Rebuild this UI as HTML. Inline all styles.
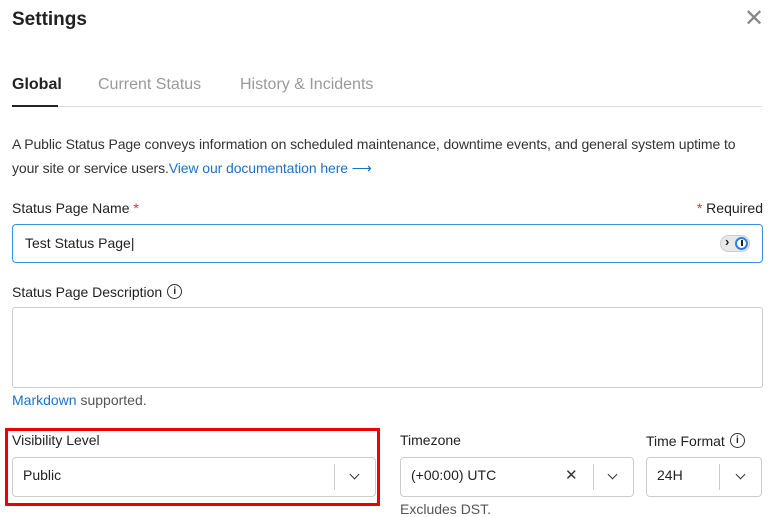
<!DOCTYPE html><html><head><style>
body{margin:0;width:780px;height:516px;background:#fff;font-family:"Liberation Sans",sans-serif;color:#222;position:relative;overflow:hidden}
.a{position:absolute;white-space:nowrap}
.box{position:absolute;border:1px solid #ccc;border-radius:4px;box-sizing:border-box}
.sep{position:absolute;width:1px;background:#ccc}
.chev{position:absolute;width:6px;height:6px;border-right:1.5px solid #333;border-bottom:1.5px solid #333;transform:rotate(45deg)}
.lab{display:flex;align-items:center}
.info{display:inline-block;width:15px;height:15px;border:1.3px solid #333;border-radius:50%;box-sizing:border-box;font-size:10px;line-height:13px;text-align:center;font-weight:bold;margin-left:5px}
</style></head><body>
<div class="a" style="left:12px;top:9px;font-size:19px;font-weight:bold;color:#222">Settings</div>
<div class="a" style="left:744px;top:4px;font-size:24px;color:#888;font-weight:300">✕</div>
<div class="a" style="left:12px;top:76px;font-size:16px;font-weight:bold">Global</div>
<div class="a" style="left:98px;top:76px;font-size:16px;color:#999">Current Status</div>
<div class="a" style="left:240px;top:76px;font-size:16px;color:#999">History &amp; Incidents</div>
<div class="a" style="left:12px;top:106px;width:750px;height:1px;background:#ddd"></div>
<div class="a" style="left:12px;top:105px;width:46px;height:2px;background:#222"></div>
<div class="a" style="left:12px;top:132px;font-size:14px;line-height:24px;color:#333;letter-spacing:-0.1px">A Public Status Page conveys information on scheduled maintenance, downtime events, and general system uptime to<br>your site or service users.<span style="color:#1a73c8">View our documentation here ⟶</span></div>
<div class="a" style="left:12px;top:200px;font-size:14px">Status Page Name <span style="color:#d33">*</span></div>
<div class="a" style="right:17px;top:200px;font-size:14px"><span style="color:#d33">*</span> Required</div>
<div class="box" style="left:12px;top:224px;width:751px;height:39px;border-color:#3a8ee6"></div>
<div class="a" style="left:25px;top:235px;font-size:14px">Test Status Page|</div>
<div class="a" style="left:720px;top:235px;width:30px;height:17px;border-radius:9px;background:#e8e8e8;border:1px solid #ccc;box-sizing:border-box"></div>
<div class="a" style="left:725px;top:234px;font-size:13px;font-weight:bold">›</div>
<div class="a" style="left:735px;top:237px;width:13px;height:13px;border-radius:50%;border:2px solid #2b7de9;box-sizing:border-box;background:#fff"></div>
<div class="a" style="left:741px;top:240px;width:2px;height:6px;background:#222"></div>
<div class="a lab" style="left:12px;top:283px;font-size:14px;height:17px">Status Page Description<span class="info">i</span></div>
<div class="box" style="left:12px;top:307px;width:751px;height:81px;border-radius:3px"></div>
<div class="a" style="left:12px;top:392px;font-size:14px;color:#555"><span style="color:#1a73c8">Markdown</span> supported.</div>
<div class="a" style="left:5px;top:428px;width:375px;height:78px;border:3px solid #e00;box-sizing:border-box"></div>
<div class="a" style="left:12px;top:432px;font-size:14px">Visibility Level</div>
<div class="box" style="left:12px;top:457px;width:364px;height:40px"></div>
<div class="a" style="left:23px;top:467px;font-size:14px">Public</div>
<div class="sep" style="left:334px;top:464px;height:26px"></div>
<div class="chev" style="left:351px;top:471px"></div>
<div class="a" style="left:400px;top:432px;font-size:14px">Timezone</div>
<div class="box" style="left:400px;top:457px;width:234px;height:40px"></div>
<div class="a" style="left:411px;top:467px;font-size:14px">(+00:00) UTC</div>
<div class="a" style="left:565px;top:466px;font-size:15px;color:#333">✕</div>
<div class="sep" style="left:593px;top:464px;height:26px"></div>
<div class="chev" style="left:609px;top:471px"></div>
<div class="a" style="left:400px;top:501px;font-size:14px;color:#555">Excludes DST.</div>
<div class="a lab" style="left:646px;top:432px;font-size:14px;height:17px">Time Format<span class="info">i</span></div>
<div class="box" style="left:646px;top:457px;width:116px;height:40px"></div>
<div class="a" style="left:657px;top:467px;font-size:14px">24H</div>
<div class="sep" style="left:719px;top:464px;height:26px"></div>
<div class="chev" style="left:737px;top:471px"></div>
</body></html>
